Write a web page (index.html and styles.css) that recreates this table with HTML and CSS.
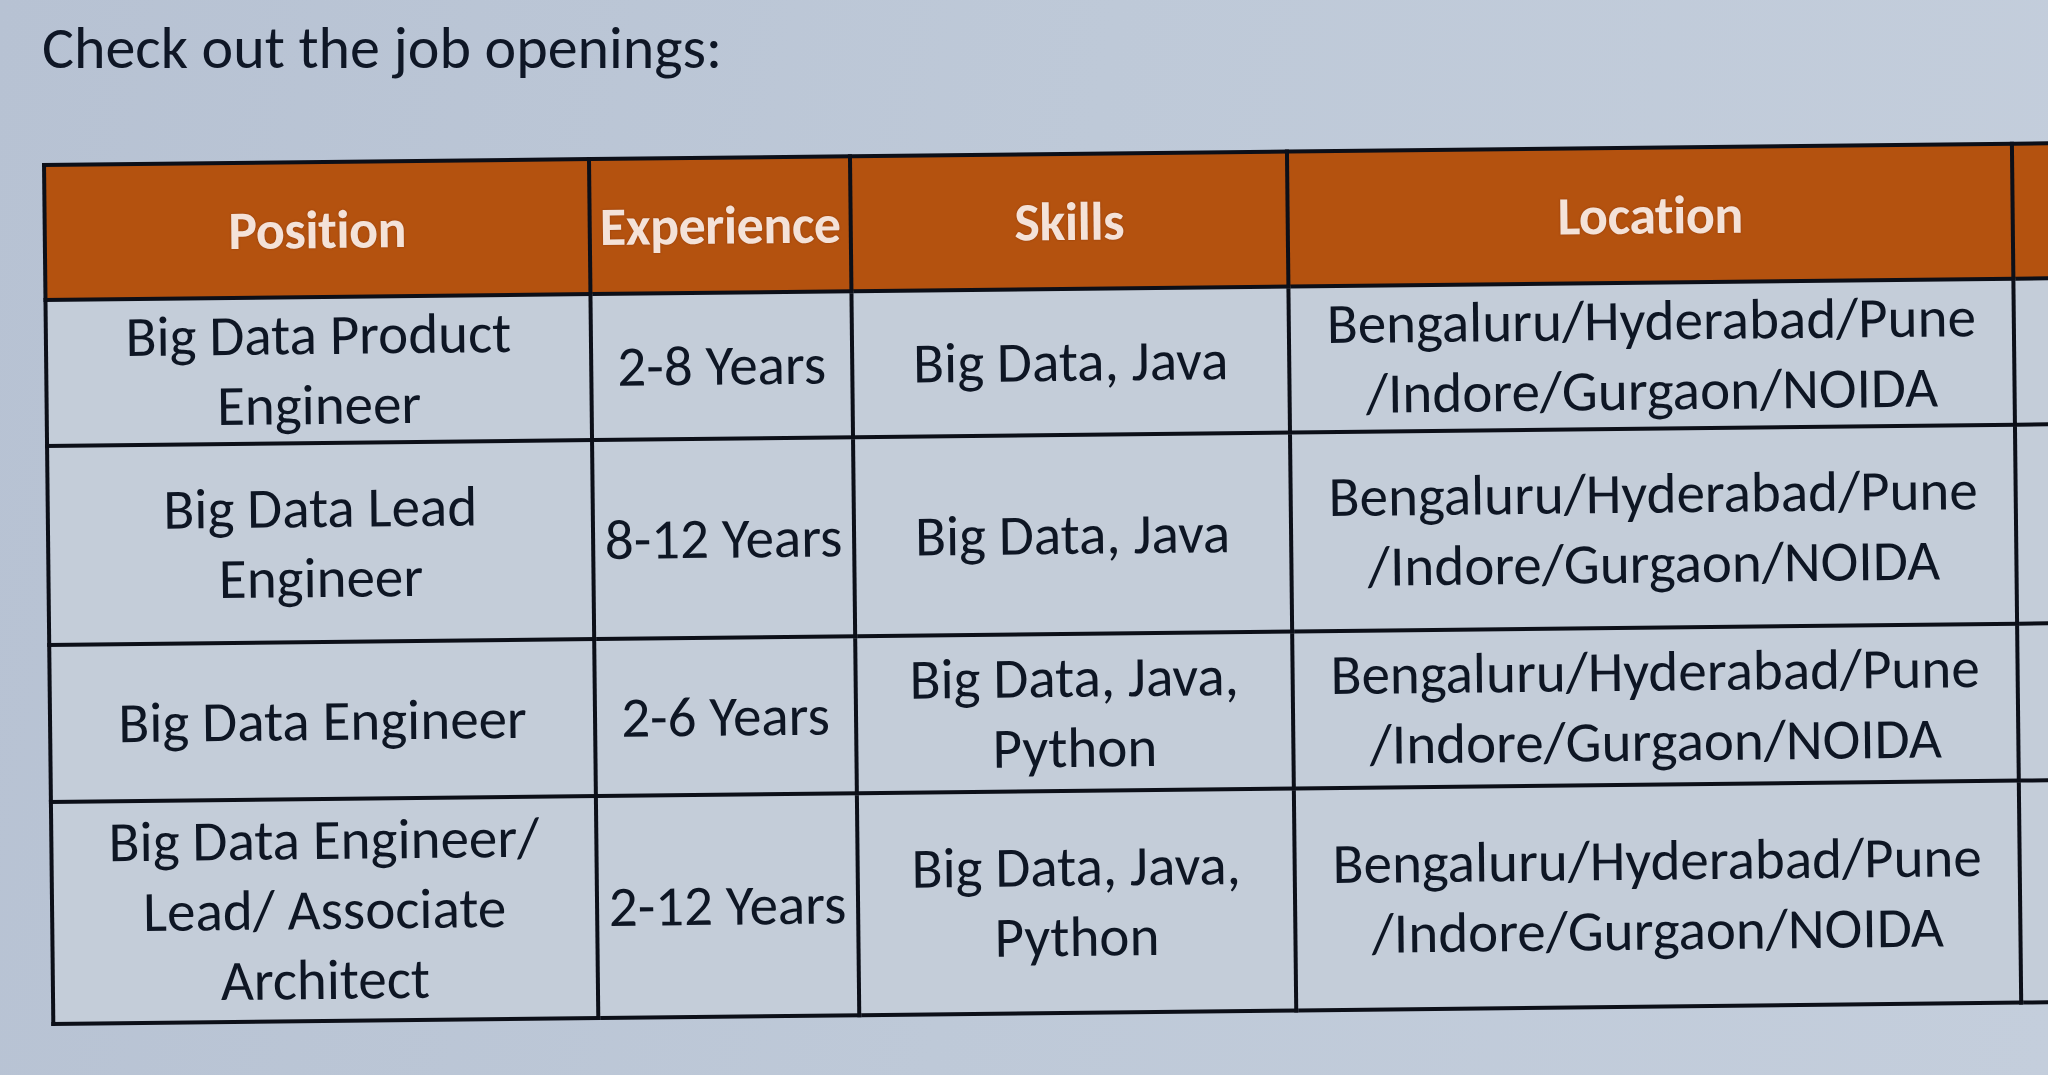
FILE: index.html
```html
<!DOCTYPE html>
<html>
<head>
<meta charset="utf-8">
<link rel="stylesheet" href="styles.css">
</head>
<body>
<main class="page">
  <h1 class="title">Check out the job openings:</h1>
  <div class="table-wrap">
    <table class="jobs">
      <colgroup>
        <col class="c-pos"><col class="c-exp"><col class="c-skill"><col class="c-loc"><col class="c-extra">
      </colgroup>
      <thead>
        <tr class="r-head">
          <th>Position</th><th>Experience</th><th>Skills</th><th>Location</th><th></th>
        </tr>
      </thead>
      <tbody>
        <tr class="r1">
          <td>Big Data Product<br>Engineer</td><td>2-8 Years</td><td>Big Data, Java</td><td>Bengaluru/Hyderabad/Pune<br>/Indore/Gurgaon/NOIDA</td><td></td>
        </tr>
        <tr class="r2">
          <td>Big Data Lead<br>Engineer</td><td>8-12 Years</td><td>Big Data, Java</td><td>Bengaluru/Hyderabad/Pune<br>/Indore/Gurgaon/NOIDA</td><td></td>
        </tr>
        <tr class="r3">
          <td>Big Data Engineer</td><td>2-6 Years</td><td>Big Data, Java,<br>Python</td><td>Bengaluru/Hyderabad/Pune<br>/Indore/Gurgaon/NOIDA</td><td></td>
        </tr>
        <tr class="r4">
          <td>Big Data Engineer/<br>Lead/ Associate<br>Architect</td><td>2-12 Years</td><td>Big Data, Java,<br>Python</td><td>Bengaluru/Hyderabad/Pune<br>/Indore/Gurgaon/NOIDA</td><td></td>
        </tr>
      </tbody>
    </table>
  </div>
</main>
</body>
</html>
```
FILE: styles.css
```css
html, body {
  margin: 0;
  padding: 0;
  width: 2048px;
  height: 1075px;
  overflow: hidden;
}
body {
  background: linear-gradient(100deg, #b7c2d3 0%, #bec9d8 50%, #c4cedc 100%);
  font-family: "Carlito", "Lato", "Liberation Sans", sans-serif;
  color: #111a28;
}
.page {
  padding: 0 0 0 42px;
}
.title {
  margin: 0;
  padding-top: 14px;
  font-size: 60px;
  font-weight: 400;
  line-height: 68px;
  color: #0f1726;
}
.table-wrap {
  margin-top: 81px;
  transform: rotate(-0.62deg);
  transform-origin: 0 0;
}
.jobs {
  border-collapse: collapse;
  table-layout: fixed;
  width: 2268px;
  border: 4px solid #0c0f18;
}
.c-pos { width: 545px; }
.c-exp { width: 261px; }
.c-skill { width: 437px; }
.c-loc { width: 725px; }
.c-extra { width: 300px; }
.jobs th, .jobs td {
  border: 4px solid #0c0f18;
  text-align: center;
  vertical-align: middle;
  padding: 0;
  white-space: nowrap;
}
.jobs th {
  background: #b4520f;
  color: #f4e2d8;
  font-weight: 700;
  font-size: 54px;
  letter-spacing: -0.5px;
  text-shadow: 0 0 2px rgba(120, 40, 0, 0.6);
}
.jobs td {
  background: #c4cdd9;
  font-size: 57px;
  line-height: 70px;
  color: #0e1624;
}
.r-head { height: 135px; }
.r1 { height: 146px; }
.r2 { height: 199px; }
.r3 { height: 157px; }
.r4 { height: 222px; }
```
